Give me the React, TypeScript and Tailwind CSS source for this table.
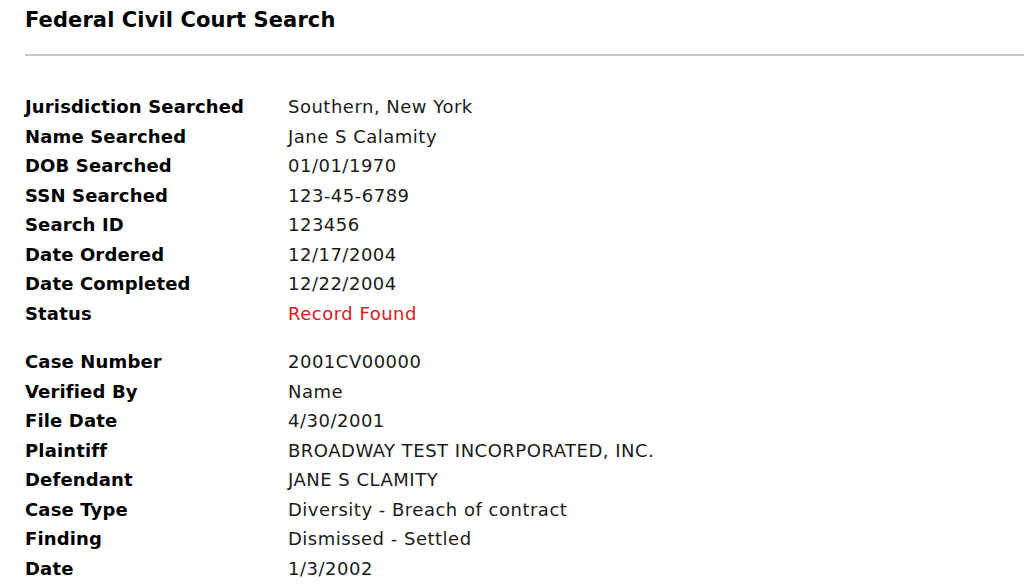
const searchRows: [string, string][] = [
  ["Jurisdiction Searched", "Southern, New York"],
  ["Name Searched", "Jane S Calamity"],
  ["DOB Searched", "01/01/1970"],
  ["SSN Searched", "123-45-6789"],
  ["Search ID", "123456"],
  ["Date Ordered", "12/17/2004"],
  ["Date Completed", "12/22/2004"],
]

const caseRows: [string, string][] = [
  ["Case Number", "2001CV00000"],
  ["Verified By", "Name"],
  ["File Date", "4/30/2001"],
  ["Plaintiff", "BROADWAY TEST INCORPORATED, INC."],
  ["Defendant", "JANE S CLAMITY"],
  ["Case Type", "Diversity - Breach of contract"],
  ["Finding", "Dismissed - Settled"],
  ["Date", "1/3/2002"],
]

const Row = ({ label, value, red }: { label: string; value: string; red?: boolean }) => (
  <div className="flex h-[29.5px] items-center">
    <div className="w-[263px] shrink-0 font-bold tracking-[0.15px] text-black">{label}</div>
    <div className={`tracking-[0.5px] ${red ? "text-[#e8141b]" : "text-[#1a1a1a]"}`}>{value}</div>
  </div>
)

export default function App() {
  return (
    <div className="h-[584px] w-[1024px] overflow-hidden bg-white pl-[25px] font-['Verdana','DejaVu_Sans',sans-serif] text-[18px]">
      <h1 className="pt-[6px] text-[21px] font-bold leading-[28px] tracking-[0.1px] text-black">Federal Civil Court Search</h1>
      <div className="mt-[20px] h-[2px] bg-[#c8c8c8]" />
      <div className="pt-[36px]">
        {searchRows.map(([label, value]) => (
          <Row key={label} label={label} value={value} />
        ))}
        <Row label="Status" value="Record Found" red />
      </div>
      <div className="pt-[19px]">
        {caseRows.map(([label, value]) => (
          <Row key={label} label={label} value={value} />
        ))}
      </div>
    </div>
  )
}
